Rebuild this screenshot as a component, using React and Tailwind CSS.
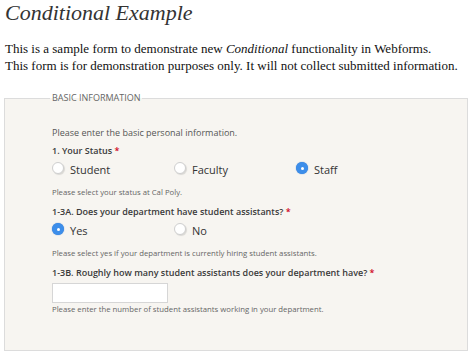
import React, { useState } from "react";

const sans = { fontFamily: '"Open Sans", "Noto Sans", sans-serif' };
const serif = { fontFamily: '"Liberation Serif", "Times New Roman", serif' };

function Radio({ checked, label, onClick }) {
  return (
    <label className="flex items-start cursor-pointer" onClick={onClick}>
      {checked ? (
        <span className="mt-[1px] flex h-[12px] w-[12px] items-center justify-center rounded-full bg-[#3d8eea] shadow-[0_0_1px_#2a6cc0]">
          <span className="h-[3px] w-[3px] rounded-full bg-white" />
        </span>
      ) : (
        <span className="mt-[1px] h-[12px] w-[12px] rounded-full border border-[#cfcfcf] bg-white shadow-[1px_1px_1px_rgba(0,0,0,0.12)]" />
      )}
      <span className="ml-[6px] mt-[1px] text-[11px] leading-[16px] text-[#333]">{label}</span>
    </label>
  );
}

function Question({ text }) {
  return (
    <div className="text-[9px] font-semibold leading-[14px] text-[#3a3a3a]">
      {text} <span className="text-[#d0021b]">*</span>
    </div>
  );
}

function Help({ children, className = "" }) {
  return (
    <div className={`text-[7.75px] leading-[12px] text-[#666] ${className}`}>{children}</div>
  );
}

export default function App() {
  const [status, setStatus] = useState("staff");
  const [hasAssistants, setHasAssistants] = useState("yes");
  const [count, setCount] = useState("");

  return (
    <div className="min-h-[353px] bg-white px-[4px] pt-[2px]">
      <h1 className="pl-[1px] text-[22px] italic leading-[22px] text-[#333]" style={serif}>
        Conditional Example
      </h1>
      <p className="mt-[16px] pl-[1px] text-[13px] leading-[17px] text-[#111]" style={serif}>
        This is a sample form to demonstrate new <em>Conditional</em> functionality in Webforms.
        <br />
        This form is for demonstration purposes only. It will not collect submitted information.
      </p>

      <fieldset
        className="mt-[18px] w-[464px] border border-[#dcdcdc] bg-[#f7f5f1] px-[47px] pb-[35px] pt-[22px]"
        style={sans}
      >
        <legend className="-ml-[2px] px-[2px] text-[9px] leading-[12px] text-[#666]">
          BASIC INFORMATION
        </legend>

        <div className="text-[9px] leading-[14px] text-[#555]">
          Please enter the basic personal information.
        </div>

        <div className="mt-[4px]">
          <Question text="1. Your Status" />
        </div>
        <div className="mt-[3px] grid w-[366px] grid-cols-3">
          <Radio label="Student" checked={status === "student"} onClick={() => setStatus("student")} />
          <Radio label="Faculty" checked={status === "faculty"} onClick={() => setStatus("faculty")} />
          <Radio label="Staff" checked={status === "staff"} onClick={() => setStatus("staff")} />
        </div>
        <Help className="mt-[8px]">Please select your status at Cal Poly.</Help>

        <div className="mt-[7px]">
          <Question text="1-3A. Does your department have student assistants?" />
        </div>
        <div className="mt-[3px] grid w-[366px] grid-cols-3">
          <Radio label="Yes" checked={hasAssistants === "yes"} onClick={() => setHasAssistants("yes")} />
          <Radio label="No" checked={hasAssistants === "no"} onClick={() => setHasAssistants("no")} />
        </div>
        <Help className="mt-[8px]">
          Please select yes if your department is currently hiring student assistants.
        </Help>

        <div className="mt-[7px]">
          <Question text="1-3B. Roughly how many student assistants does your department have?" />
        </div>
        <input
          type="text"
          value={count}
          onChange={(e) => setCount(e.target.value)}
          className="mt-[3px] block h-[20px] w-[116px] border border-[#d6d6d6] bg-white px-1 text-[10px] outline-none"
        />
        <Help className="leading-[9px]">
          Please enter the number of student assistants working in your department.
        </Help>
      </fieldset>
    </div>
  );
}
